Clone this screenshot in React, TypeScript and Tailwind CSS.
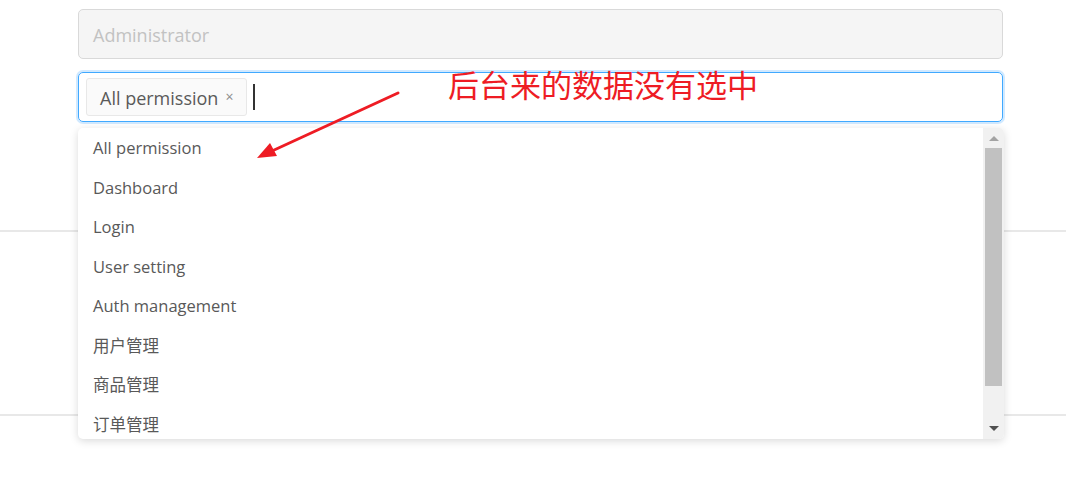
import React from "react";

const options = [
  "All permission",
  "Dashboard",
  "Login",
  "User setting",
  "Auth management",
  "用户管理",
  "商品管理",
  "订单管理",
];

const font = { fontFamily: '"Open Sans", "Noto Sans CJK SC", sans-serif' };

export default function App() {
  return (
    <div className="relative w-[1066px] h-[483px] bg-white overflow-hidden" style={font}>
      <div className="pt-[9px] px-[78px] w-[1080px] flex flex-col">
        {/* disabled name input */}
        <div className="h-[50px] w-[925px] rounded-[5px] border border-[#d9d9d9] bg-[#f5f5f5] px-[14px] pt-[3px] flex items-center text-[18px] text-[#c2c2c2]">
          Administrator
        </div>

        {/* permission select */}
        <div className="mt-[13px] h-[50px] w-[925px] rounded-[5px] border border-[#40a9ff] shadow-[0_0_0_2px_rgba(24,144,255,0.2)] px-[7px] flex items-center gap-[6px]">
          <div className="h-[38px] px-[13px] pt-[2px] flex items-center gap-[7px] rounded-[3px] border border-[#e8e8e8] bg-[#fafafa] text-[18px] text-[#595959]">
            All permission
            <span className="text-[14px] text-[#8c8c8c] -mt-[4px]">×</span>
          </div>
          <div className="w-[2px] h-[26px] bg-[#333]" />
        </div>
      </div>

      {/* modal dividers */}
      <div className="mt-[108px] h-[2px] bg-[#e8e8e8]" />
      <div className="mt-[182px] h-[2px] bg-[#e8e8e8]" />

      {/* dropdown overlay */}
      <div className="absolute left-[78px] top-[128px] w-[926px] h-[311px] bg-white rounded-[5px] shadow-[0_2px_8px_rgba(0,0,0,0.15)] flex overflow-hidden">
        <ul className="flex-1 pt-[1px]">
          {options.map((o) => (
            <li key={o} className="h-[39.5px] px-[15px] flex items-center text-[16.5px] text-[#595959]">
              {o}
            </li>
          ))}
        </ul>
        <div className="w-[21px] bg-[#f1f1f1] flex flex-col items-center">
          <div className="h-[20px] flex items-center justify-center">
            <div className="w-0 h-0 border-l-[5px] border-r-[5px] border-b-[5px] border-l-transparent border-r-transparent border-b-[#a3a3a3]" />
          </div>
          <div className="w-[17px] h-[238px] bg-[#c1c1c1]" />
          <div className="flex-1" />
          <div className="h-[22px] flex items-center justify-center">
            <div className="w-0 h-0 border-l-[5px] border-r-[5px] border-t-[5px] border-l-transparent border-r-transparent border-t-[#505050]" />
          </div>
        </div>
      </div>

      {/* annotation */}
      <div
        className="absolute left-[448px] top-[64px] text-[31px] leading-[40px] text-[#ee1c24]"
        style={{ fontFamily: '"Noto Sans CJK SC", sans-serif' }}
      >
        后台来的数据没有选中
      </div>
      <svg className="absolute left-0 top-0 pointer-events-none" width="1066" height="483">
        <line x1="398" y1="93" x2="272" y2="151" stroke="#ee1c24" strokeWidth="3" strokeLinecap="round" />
        <polygon points="257,158 270,143 277,156" fill="#ee1c24" />
      </svg>
    </div>
  );
}
